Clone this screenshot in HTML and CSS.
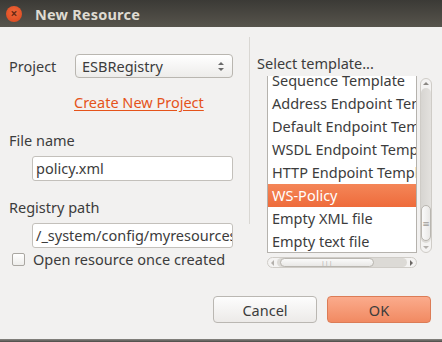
FILE: index.html
```html
<!DOCTYPE html>
<html lang="en">
<head>
    <meta charset="UTF-8" />
    <title>New Resource</title>
    <link rel="stylesheet" href="styles.css">
</head>
<body>
<div class="window">
    <div class="titlebar">
        <span class="close-btn">×</span>
        <span class="title">New Resource</span>
    </div>

    <div class="content">
        <!-- Left side: project and file fields -->
        <div class="left">
            <div class="project-row">
                <label class="project-label">Project</label>
                <div class="combo">
                    <span>ESBRegistry</span>
                    <span class="combo-arrows">
                        <span class="arrow-up"></span>
                        <span class="arrow-down"></span>
                    </span>
                </div>
            </div>
            <a class="create-link" href="#">Create New Project</a>

            <div class="field-label">File name</div>
            <div class="input">policy.xml</div>

            <div class="field-label">Registry path</div>
            <div class="input">/_system/config/myresources</div>

            <div class="check-row">
                <span class="checkbox"></span>
                <span>Open resource once created</span>
            </div>
        </div>

        <div class="separator"></div>

        <!-- Right side: template list -->
        <div class="right">
            <div class="list-label">Select template...</div>
            <div class="list-area">
                <div class="list">
                    <div class="list-inner">
                        <div class="item">Sequence Template</div>
                        <div class="item">Address Endpoint Template</div>
                        <div class="item">Default Endpoint Template</div>
                        <div class="item">WSDL Endpoint Template</div>
                        <div class="item">HTTP Endpoint Template</div>
                        <div class="item selected">WS-Policy</div>
                        <div class="item">Empty XML file</div>
                        <div class="item">Empty text file</div>
                    </div>
                </div>
                <div class="vscroll">
                    <span class="tri tri-up"></span>
                    <div class="vtrough">
                        <div class="vthumb"><span class="grip">≡</span></div>
                    </div>
                    <span class="tri tri-down"></span>
                </div>
            </div>
            <div class="hscroll">
                <span class="tri tri-left"></span>
                <div class="htrough">
                    <div class="hthumb"><span class="hgrip">|||</span></div>
                </div>
                <span class="tri tri-right"></span>
            </div>
        </div>
    </div>

    <div class="buttons">
        <button class="btn">Cancel</button>
        <button class="btn btn-ok">OK</button>
    </div>
    <div class="bottom-edge"></div>
</div>
</body>
</html>
```

FILE: styles.css
```css
* {
    box-sizing: border-box;
    margin: 0;
    padding: 0;
}

body {
    font-family: "Noto Sans", "DejaVu Sans", sans-serif;
    font-size: 14.5px;
    color: #3c3c3c;
    background: #f2f1f0;
    overflow: hidden;
}

.window {
    width: 442px;
    height: 342px;
    display: flex;
    flex-direction: column;
    background: #f2f1f0;
}

/* Title bar */
.titlebar {
    height: 27px;
    flex-shrink: 0;
    display: flex;
    align-items: center;
    padding-left: 6px;
    background: linear-gradient(#3b3a36, #57544c);
}

.close-btn {
    width: 16px;
    height: 16px;
    border-radius: 50%;
    background: radial-gradient(circle at 50% 40%, #f0683a, #d9461d);
    color: #6a2a14;
    font-size: 12px;
    line-height: 15px;
    text-align: center;
    font-weight: bold;
}

.title {
    margin-left: 13px;
    color: #dfdbd2;
    font-weight: bold;
    font-size: 14.5px;
    letter-spacing: 0.2px;
}

/* Content */
.content {
    display: flex;
    flex-shrink: 0;
}

.left {
    width: 249px;
    display: flex;
    flex-direction: column;
    align-items: flex-start;
}

.project-row {
    margin-top: 27px;
    height: 24px;
    display: flex;
    align-items: center;
}

.project-label {
    width: 75px;
    padding-left: 9px;
}

.combo {
    width: 158px;
    height: 24px;
    border: 1px solid #b9b6b0;
    border-radius: 4px;
    background: linear-gradient(#ffffff, #edecea);
    display: flex;
    align-items: center;
    justify-content: space-between;
    padding: 0 8px 0 6px;
}

.combo-arrows {
    display: flex;
    flex-direction: column;
    gap: 3px;
}

.arrow-up, .arrow-down {
    width: 0;
    height: 0;
    border-left: 3px solid transparent;
    border-right: 3px solid transparent;
}

.arrow-up {
    border-bottom: 3px solid #6a6a6a;
}

.arrow-down {
    border-top: 3px solid #6a6a6a;
}

.create-link {
    margin-top: 15px;
    margin-left: 74px;
    line-height: 18px;
    color: #e5531a;
    text-decoration: underline;
    text-underline-offset: 2px;
}

.field-label {
    line-height: 18px;
    padding-left: 9px;
    margin-top: 20px;
}

.field-label + .input {
    margin-top: 7px;
}

.input {
    margin-left: 32px;
    width: 201px;
    height: 25px;
    line-height: 23px;
    border: 1px solid #c3c0bb;
    border-radius: 3px;
    background: #fff;
    padding-left: 3px;
    white-space: nowrap;
    overflow: hidden;
}

.input + .field-label {
    margin-top: 17px;
}

.check-row {
    margin-top: 2px;
    margin-left: 12px;
    line-height: 18px;
    display: flex;
    align-items: center;
    gap: 8px;
}

.checkbox {
    width: 13px;
    height: 13px;
    border: 1px solid #aaa7a2;
    border-radius: 2px;
    background: linear-gradient(#ffffff, #eeedeb);
}

.separator {
    width: 1px;
    height: 187px;
    margin-top: 10px;
    background: #d9d7d3;
}

/* Template list */
.right {
    display: flex;
    flex-direction: column;
}

.list-label {
    margin-top: 27px;
    padding-left: 7px;
    line-height: 18px;
}

.list-area {
    margin-top: 4px;
    margin-left: 17px;
    display: flex;
    gap: 3px;
}

.list {
    width: 150px;
    height: 177px;
    border: 1px solid #b5b2ad;
    border-top: none;
    background: #fff;
    overflow: hidden;
}

.list-inner {
    margin-top: -7px;
}

.item {
    height: 23px;
    line-height: 23px;
    padding-left: 4px;
    white-space: nowrap;
}

.item.selected {
    background: linear-gradient(#f48658, #ee6b3b);
    color: #fff;
}

.vscroll {
    width: 12px;
    height: 175px;
    margin-top: 2px;
    border: 1px solid #cfccc7;
    border-radius: 6px;
    background: #f4f3f2;
    display: flex;
    flex-direction: column;
    align-items: center;
    padding: 3px 0;
}

.vtrough {
    flex: 1;
    width: 10px;
    margin: 3px 0;
    border-radius: 5px;
    background: linear-gradient(90deg, #d7d5d1, #e3e1de);
    display: flex;
    flex-direction: column;
    justify-content: flex-end;
}

.vthumb {
    height: 36px;
    margin-bottom: 2px;
    border: 1px solid #b9b6b0;
    border-radius: 5px;
    background: linear-gradient(90deg, #fafafa, #e9e8e6);
    display: flex;
    align-items: center;
    justify-content: center;
}

.grip {
    font-size: 9px;
    color: #a09d98;
    line-height: 9px;
}

.hscroll {
    margin-top: 4px;
    margin-left: 17px;
    width: 150px;
    height: 11px;
    border: 1px solid #cfccc7;
    border-radius: 6px;
    background: #f4f3f2;
    display: flex;
    align-items: center;
    padding: 0 3px;
}

.htrough {
    flex: 1;
    height: 9px;
    margin: 0 3px;
    border-radius: 5px;
    background: #dcdad6;
    display: flex;
}

.hthumb {
    width: 94px;
    margin-left: 3px;
    border: 1px solid #b9b6b0;
    border-radius: 5px;
    background: linear-gradient(#fafafa, #e9e8e6);
    display: flex;
    align-items: center;
    justify-content: center;
}

.hgrip {
    font-size: 6px;
    color: #a09d98;
    line-height: 6px;
    letter-spacing: 0.5px;
}

.tri {
    width: 0;
    height: 0;
}

.tri-up {
    border-left: 3px solid transparent;
    border-right: 3px solid transparent;
    border-bottom: 3px solid #8a8783;
}

.tri-down {
    border-left: 3px solid transparent;
    border-right: 3px solid transparent;
    border-top: 3px solid #b3b0ac;
}

.tri-left {
    border-top: 3px solid transparent;
    border-bottom: 3px solid transparent;
    border-right: 3px solid #b3b0ac;
}

.tri-right {
    border-top: 3px solid transparent;
    border-bottom: 3px solid transparent;
    border-left: 3px solid #6a6764;
}

/* Buttons */
.buttons {
    margin-top: auto;
    display: flex;
    justify-content: flex-end;
    gap: 10px;
    padding: 0 11px 16px 0;
}

.btn {
    width: 104px;
    height: 27px;
    font-family: inherit;
    font-size: 14.5px;
    color: #3c3c3c;
    border: 1px solid #bab7b2;
    border-radius: 4px;
    background: linear-gradient(#fdfdfd, #eceae8);
}

.btn-ok {
    border-color: #dc7c56;
    background: linear-gradient(#fbab8c, #f18a62);
}

.bottom-edge {
    height: 3px;
    flex-shrink: 0;
    background: linear-gradient(#8a8884, #4a4945);
}
```
